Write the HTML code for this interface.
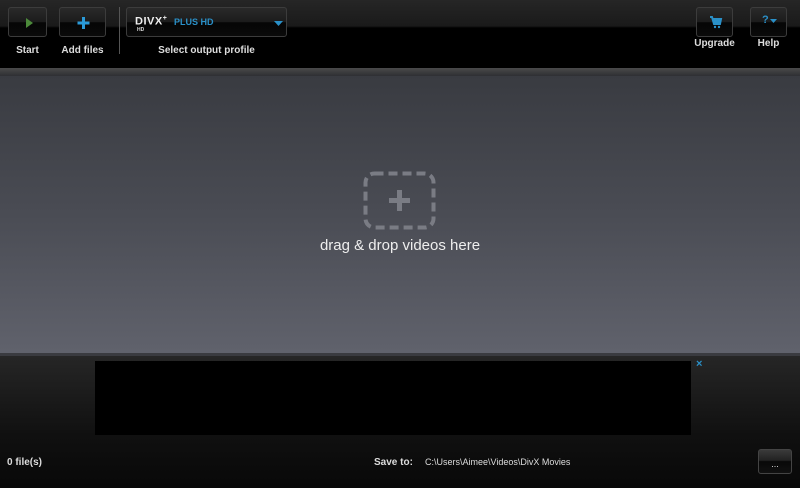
<!DOCTYPE html>
<html><head><style>
*{margin:0;padding:0;box-sizing:border-box}
body{width:800px;height:488px;overflow:hidden;background:#000;font-family:"Liberation Sans",sans-serif;position:relative}
.top{position:absolute;left:0;top:0;width:800px;height:68px;background:linear-gradient(#262626 0,#1a1a1a 26px,#000 28px,#000 68px)}
.bar{position:absolute;left:0;top:68px;width:800px;height:8px;background:linear-gradient(#4a4a4a,#2e2f33)}
.main{position:absolute;left:0;top:76px;width:800px;height:277px;background:linear-gradient(#393b41,#4a4c54 50%,#60626c)}
.sep2{position:absolute;left:0;top:353px;width:800px;height:3px;background:#3a3b40}
.bot{position:absolute;left:0;top:356px;width:800px;height:132px;background:linear-gradient(#262626,#101010 60%,#080808)}
.btn{position:absolute;top:7px;height:30px;border:1px solid #3c3c3c;border-radius:3px;background:linear-gradient(#2a2a2a,#1c1c1c 50%,#050505 52%,#0a0a0a)}
.lbl{position:absolute;top:45px;color:#ddd;font-size:10px;font-weight:bold;text-align:center}
.ad{position:absolute;left:95px;top:361px;width:596px;height:74px;background:#000}
.t{position:absolute;color:#ddd;font-size:10px}
</style></head><body>
<div class="top"></div><div class="bar"></div><div class="main"></div><div class="sep2"></div><div class="bot"></div>
<div class="btn" style="left:8px;width:39px"><svg width="39" height="30" style="position:absolute;left:0;top:0"><path d="M17 10 L24 15 L17 20Z" fill="#4c8a3a"/></svg></div>
<div class="btn" style="left:59px;width:47px"><svg width="47" height="30" style="position:absolute;left:0;top:0"><path d="M23.5 9v12M17.5 15h12" stroke="#2a9ad8" stroke-width="3"/></svg></div>
<div style="position:absolute;left:119px;top:7px;width:1px;height:47px;background:#555"></div>
<div class="btn" style="left:126px;width:161px">
<span style="position:absolute;left:8px;top:7px;color:#eee;font-size:11px;font-weight:bold;letter-spacing:0.5px">DIVX<sup style="font-size:7px">+</sup></span>
<span style="position:absolute;left:10px;top:19px;color:#ddd;font-size:5px;font-weight:bold">HD</span>
<span style="position:absolute;left:47px;top:9px;color:#2a90c8;font-size:9px;font-weight:bold">PLUS HD</span>
<svg width="10" height="8" style="position:absolute;left:147px;top:12px"><path d="M0 1h9L4.5 6Z" fill="#2a90c8"/></svg></div>
<div class="btn" style="left:696px;width:37px"><svg width="37" height="30" style="position:absolute;left:0;top:0"><path d="M13 9h2l2 7h6l1-5h-8" stroke="#2a90c8" stroke-width="2" fill="#2a90c8"/><circle cx="18" cy="19" r="1.2" fill="#2a90c8"/><circle cx="22" cy="19" r="1.2" fill="#2a90c8"/></svg></div>
<div class="btn" style="left:750px;width:37px"><span style="position:absolute;left:11px;top:6px;color:#2a90c8;font-size:11px;font-weight:bold">?</span><svg width="8" height="6" style="position:absolute;left:19px;top:11px"><path d="M0 0h7L3.5 4Z" fill="#2a90c8"/></svg></div>
<div class="lbl" style="left:8px;width:39px">Start</div>
<div class="lbl" style="left:55px;width:55px">Add files</div>
<div class="lbl" style="left:126px;width:161px">Select output profile</div>
<div class="lbl" style="left:686px;width:57px;top:38px">Upgrade</div>
<div class="lbl" style="left:750px;width:37px;top:38px">Help</div>
<svg width="74" height="60" style="position:absolute;left:363px;top:171px"><rect x="2.5" y="2.5" width="68" height="54" rx="9" fill="none" stroke="#7a7c84" stroke-width="4" stroke-dasharray="9 5"/><path d="M36.5 19v21M26 29.5h21" stroke="#7a7c84" stroke-width="5"/></svg>
<div style="position:absolute;left:0;width:800px;top:237px;text-align:center;color:#eee;font-size:15px">drag &amp; drop videos here</div>
<div class="ad"></div>
<div style="position:absolute;left:696px;top:358px;color:#2a90c8;font-size:11px;font-weight:bold">×</div>
<div class="t" style="left:7px;top:457px;font-weight:bold">0 file(s)</div>
<div class="t" style="left:374px;top:457px;font-weight:bold">Save to:</div>
<div class="t" style="left:425px;top:457px;font-size:9px">C:\Users\Aimee\Videos\DivX Movies</div>
<div style="position:absolute;left:758px;top:449px;width:34px;height:25px;border:1px solid #444;border-radius:3px;background:linear-gradient(#3a3a3a,#222 45%,#080808 50%,#111);color:#ddd;font-size:9px;text-align:center;line-height:28px">...</div>
</body></html>
